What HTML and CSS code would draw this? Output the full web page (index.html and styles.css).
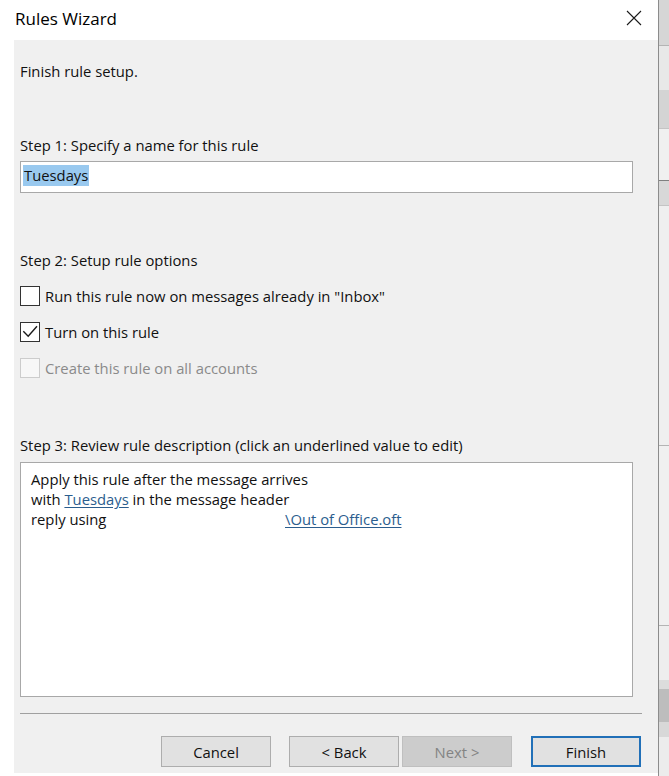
FILE: index.html
```html
<!DOCTYPE html>
<html>
<head>
<meta charset="utf-8">
<title>Rules Wizard</title>
<link rel="stylesheet" href="styles.css">
</head>
<body>
<div class="screen">
  <div class="dialog">
    <div class="titlebar">
      <span class="title">Rules Wizard</span>
      <svg class="close" width="16" height="16" viewBox="0 0 16 16" aria-hidden="true">
        <path d="M1 1 L15 15 M15 1 L1 15" stroke="#1a1a1a" stroke-width="1.1" fill="none"/>
      </svg>
    </div>
    <div class="content">
      <div class="intro">Finish rule setup.</div>

      <div class="label step1">Step 1: Specify a name for this rule</div>
      <div class="textbox"><span class="sel">Tuesdays</span></div>

      <div class="label step2">Step 2: Setup rule options</div>
      <div class="options">
        <div class="option"><span class="box"></span><span>Run this rule now on messages already in "Inbox"</span></div>
        <div class="option"><span class="box"><svg width="18" height="18" viewBox="0 0 18 18" aria-hidden="true"><path d="M2.3 8.2 L7.2 13.2 L16 3.2" stroke="#1a1a1a" stroke-width="1.4" fill="none"/></svg></span><span>Turn on this rule</span></div>
        <div class="option disabled"><span class="box"></span><span>Create this rule on all accounts</span></div>
      </div>

      <div class="label step3">Step 3: Review rule description (click an underlined value to edit)</div>
      <div class="desc">
        <div>Apply this rule after the message arrives</div>
        <div>with <span class="link">Tuesdays</span> in the message header</div>
        <div><span class="lead">reply using</span><span class="link">\Out of Office.oft</span></div>
      </div>

      <div class="sep"></div>

      <div class="buttons">
        <div class="btn">Cancel</div>
        <div class="btn back">&lt; Back</div>
        <div class="btn next">Next &gt;</div>
        <div class="btn finish">Finish</div>
      </div>
    </div>
  </div>
  <div class="backdrop">
    <div class="bd s1"></div>
    <div class="bd line mid"></div>
    <div class="bd s2"></div>
    <div class="bd s3"></div>
    <div class="bd line light"></div>
    <div class="bd s4"></div>
    <div class="bd line dark"></div>
    <div class="bd s5"></div>
    <div class="bd line light"></div>
    <div class="bd s6"></div>
    <div class="bd line mid"></div>
    <div class="bd s7"></div>
    <div class="bd line mid"></div>
    <div class="bd s8"></div>
    <div class="bd s9"></div>
    <div class="bd s10"></div>
    <div class="bd s11"></div>
    <div class="bd s12"></div>
  </div>
</div>
</body>
</html>
```

FILE: styles.css
```css
html, body {
  margin: 0;
  padding: 0;
  background: #ffffff;
}

body {
  font-family: "Open Sans", "Noto Sans", "DejaVu Sans", sans-serif;
  color: #111111;
}

.screen {
  display: flex;
  width: 669px;
  height: 776px;
  overflow: hidden;
}

.dialog {
  flex: none;
  width: 659px;
  height: 776px;
  box-sizing: border-box;
  border-right: 1px solid #8c8c8c;
  background: #ffffff;
  display: flex;
  flex-direction: column;
}

.titlebar {
  flex: none;
  height: 40px;
  display: flex;
  align-items: center;
  justify-content: space-between;
  padding: 0 16px 0 15px;
}

.title {
  font-size: 17px;
  color: #000000;
  margin-top: -4px;
}

.close {
  display: block;
  margin-top: -5px;
}

.content {
  flex: none;
  margin-left: 14px;
  width: 644px;
  height: 733px;
  box-sizing: border-box;
  background: #f0f0f0;
  padding: 21px 16px 0 6px;
  display: flex;
  flex-direction: column;
  font-size: 14.8px;
  line-height: 20px;
}

.intro,
.label {
  height: 20px;
}

.step1 {
  margin-top: 54px;
}

.textbox {
  margin-top: 6px;
  margin-right: 9px;
  height: 32px;
  box-sizing: border-box;
  border: 1px solid #a8a8a8;
  background: #ffffff;
  padding: 0 0 3px 2px;
  display: flex;
  align-items: center;
}

.sel {
  background: #99c9ef;
  line-height: 21px;
  padding: 0 1px;
}

.step2 {
  margin-top: 57px;
}

.options {
  margin-top: 16px;
  display: flex;
  flex-direction: column;
  gap: 16px;
}

.option {
  height: 20px;
  display: flex;
  align-items: center;
  gap: 5px;
}

.box {
  flex: none;
  width: 20px;
  height: 20px;
  box-sizing: border-box;
  border: 1px solid #333333;
  background: #ffffff;
  display: flex;
  align-items: center;
  justify-content: center;
}

.option.disabled {
  color: #8a8a8a;
}

.option.disabled .box {
  border-color: #cccccc;
  background: #f7f7f7;
}

.step3 {
  margin-top: 57px;
}

.desc {
  margin-top: 7px;
  margin-right: 9px;
  height: 235px;
  box-sizing: border-box;
  border: 1px solid #a8a8a8;
  background: #ffffff;
  padding: 6px 10px;
  line-height: 20px;
}

.lead {
  display: inline-block;
  width: 254px;
}

.link {
  color: #2b5d8e;
  text-decoration: underline;
  text-underline-offset: 2px;
}

.sep {
  margin-top: 16px;
  height: 1px;
  background: #a0a0a0;
}

.buttons {
  margin-top: 22px;
  display: flex;
  justify-content: flex-end;
  padding-right: 1px;
}

.btn {
  flex: none;
  width: 110px;
  height: 31px;
  box-sizing: border-box;
  border: 1px solid #adadad;
  background: #e1e1e1;
  display: flex;
  align-items: center;
  justify-content: center;
  font-size: 14.8px;
  color: #111111;
}

.btn.back {
  margin-left: 18px;
}

.btn.next {
  margin-left: 3px;
  background: #cccccc;
  border-color: #bfbfbf;
  color: #838383;
}

.btn.finish {
  margin-left: 19px;
  border: 2px solid #2170b8;
}

.backdrop {
  flex: 1;
  display: flex;
  flex-direction: column;
  background: #eeeeee;
}

.bd {
  flex: none;
}

.bd.line { height: 1px; }
.bd.line.mid { background: #b4b4b4; }
.bd.line.light { background: #c4c4c4; }
.bd.line.dark { background: #808080; }

.s1 { height: 45px; background: #d6d6d6; }
.s2 { height: 44px; background: #e8e8e8; }
.s3 { height: 38px; background: #d4d4d4; }
.s4 { height: 51px; background: #f0f0f0; }
.s5 { height: 24px; background: #d8d8d8; }
.s6 { height: 239px; background: #efefef; }
.s7 { height: 179px; background: #f0f0f0; }
.s8 { height: 54px; background: #eeeeee; }
.s9 { height: 9px; background: #dcdcdc; }
.s10 { height: 33px; background: #bdbdbd; }
.s11 { height: 15px; background: #d8d8d8; }
.s12 { height: 39px; background: #ececec; }
```
